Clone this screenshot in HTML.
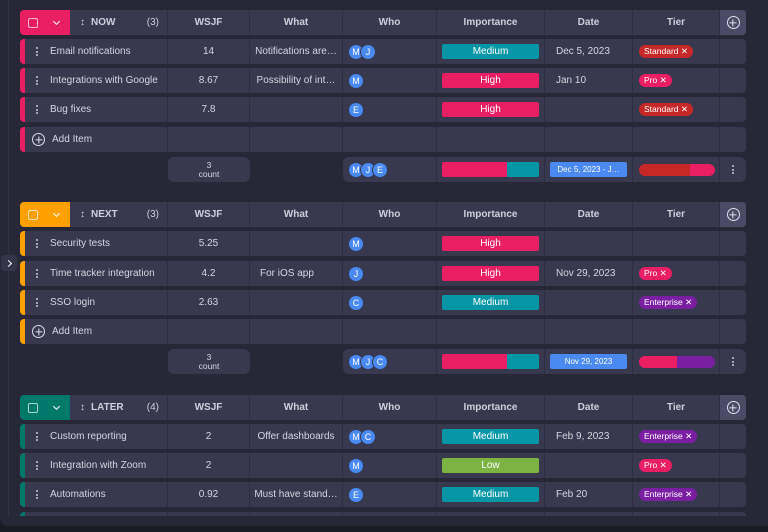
<!DOCTYPE html>
<html><head><meta charset="utf-8"><style>
*{box-sizing:border-box;margin:0;padding:0}
body{width:768px;height:532px;background:#1b1b26;font-family:"Liberation Sans",sans-serif;color:#d6d6e2;font-size:10px;position:relative;overflow:hidden}
.panel{position:absolute;left:0;top:0;width:768px;height:526px;background:#272738;border-radius:0 0 8px 8px}
.inner{position:absolute;left:8px;top:0;width:760px;height:516px;border-left:1px solid #323246;overflow:hidden}
.row{position:absolute;left:20px;width:726px;height:25px;background:#38384f;border-radius:4px;display:flex;overflow:hidden}
.c{height:100%;border-right:1px solid #2e2e43;display:flex;align-items:center;justify-content:center;flex:none}
.w0{width:143px;justify-content:flex-start}.w1{width:82px}.w2{width:93px}.w3{width:94px;justify-content:flex-start;padding-left:5px}.w4{width:108px}.w5{width:88px;justify-content:flex-start;padding-left:11px}.w6{width:87px;justify-content:flex-start;padding-left:6px}.w7{width:26px;border-right:none}
.stripe{width:5px;height:100%;flex:none}
.hd .c{font-weight:bold;color:#cfcfdc}
.hblk{width:50px;height:100%;display:flex;align-items:center;padding-left:8px;flex:none}
.cb{width:10px;height:10px;border:1px solid rgba(255,255,255,.7);border-radius:2px}
.chev{margin-left:16px;width:5px;height:5px;border-right:1.5px solid #fff;border-bottom:1.5px solid #fff;transform:rotate(45deg);margin-top:-3px}
.hname{width:98px;justify-content:flex-start;padding-left:10px;font-weight:bold}
.hname .cnt{margin-left:auto;margin-right:8px;font-weight:normal}
.dots{width:2px;margin:0 12px 0 11px;display:flex;flex-direction:column;gap:1.5px}
.dots i{display:block;width:2px;height:2px;background:#c8c8d6;border-radius:1px}
.av{width:16px;height:16px;border-radius:50%;background:#4a88f2;color:#fff;font-size:9px;display:flex;align-items:center;justify-content:center;border:1px solid #38384f;margin-right:-4px}
.pill{width:97px;height:15px;border-radius:2px;color:#fff;display:flex;align-items:center;justify-content:center}
.med{background:#0796a5}.high{background:#e91e63}.low{background:#7cb342}
.tag{height:13px;border-radius:7px;color:#fff;font-size:8.5px;padding:0 5px;display:flex;align-items:center}
.std{background:#c62828}.pro{background:#e91e63}.ent{background:#7b1fa2}
.plus{width:13px;height:13px;border:1.3px solid #e0e0ea;border-radius:50%;position:relative}
.plus:before,.plus:after{content:"";position:absolute;background:#e0e0ea;left:50%;top:50%;transform:translate(-50%,-50%)}
.plus:before{width:7px;height:1.3px}.plus:after{width:1.3px;height:7px}
.pc{background:#4b4b66}
.sum{position:absolute;height:25px;background:#38384f;border-radius:6px;display:flex}
.cntbox{left:168px;width:82px;flex-direction:column;align-items:center;justify-content:center;line-height:9px;font-size:8.5px}
.bar{display:flex;height:15px;border-radius:2px;overflow:hidden;width:97px}
.tbar{display:flex;height:12px;border-radius:6px;overflow:hidden;width:76px}
.dchip{width:77px;height:15px;background:#4a88f2;border-radius:2px;color:#fff;font-size:8px;display:flex;align-items:center;justify-content:center}
.toggle{position:absolute;left:1px;top:255px;width:16px;height:16px;background:#353549;border-radius:4px;display:flex;align-items:center;justify-content:center}
.toggle i{width:5px;height:5px;border-right:1.5px solid #fff;border-top:1.5px solid #fff;transform:rotate(45deg);margin-left:-2px}
</style></head><body>
<div class="panel"><div class="inner"></div></div>

<!-- NOW -->
<div class="row hd" style="top:10px"><div class="hblk" style="background:#e91e63"><div class="cb"></div><div class="chev"></div></div><div class="c hname"><span style="margin-right:6px">↕</span>NOW<span class="cnt">(3)</span></div><div class="c w1">WSJF</div><div class="c w2">What</div><div class="c w3" style="justify-content:center;padding:0">Who</div><div class="c w4">Importance</div><div class="c w5" style="justify-content:center;padding:0">Date</div><div class="c w6" style="justify-content:center;padding:0">Tier</div><div class="c w7 pc"><div class="plus"></div></div></div>
<div class="row" style="top:39px"><div class="stripe" style="background:#e91e63"></div><div class="c w0"><div class="dots"><i></i><i></i><i></i></div>Email notifications</div><div class="c w1">14</div><div class="c w2">Notifications are…</div><div class="c w3"><div class="av">M</div><div class="av">J</div></div><div class="c w4"><div class="pill med">Medium</div></div><div class="c w5">Dec 5, 2023</div><div class="c w6"><div class="tag std">Standard ✕</div></div><div class="c w7"></div></div>
<div class="row" style="top:68px"><div class="stripe" style="background:#e91e63"></div><div class="c w0"><div class="dots"><i></i><i></i><i></i></div>Integrations with Google</div><div class="c w1">8.67</div><div class="c w2">Possibility of int…</div><div class="c w3"><div class="av">M</div></div><div class="c w4"><div class="pill high">High</div></div><div class="c w5">Jan 10</div><div class="c w6"><div class="tag pro">Pro ✕</div></div><div class="c w7"></div></div>
<div class="row" style="top:97px"><div class="stripe" style="background:#e91e63"></div><div class="c w0"><div class="dots"><i></i><i></i><i></i></div>Bug fixes</div><div class="c w1">7.8</div><div class="c w2"></div><div class="c w3"><div class="av">E</div></div><div class="c w4"><div class="pill high">High</div></div><div class="c w5"></div><div class="c w6"><div class="tag std">Standard ✕</div></div><div class="c w7"></div></div>
<div class="row" style="top:127px"><div class="stripe" style="background:#e91e63"></div><div class="c w0"><div class="plus" style="margin:0 7px 0 7px"></div>Add Item</div><div class="c w1"></div><div class="c w2"></div><div class="c w3"></div><div class="c w4"></div><div class="c w5"></div><div class="c w6"></div><div class="c w7"></div></div>
<div class="sum cntbox" style="top:157px"><div>3</div><div>count</div></div>
<div class="sum" style="top:157px;left:343px;width:403px"><div class="c w3" style="border-right:1px solid #2e2e43"><div class="av">M</div><div class="av">J</div><div class="av">E</div></div><div class="c w4"><div class="bar"><div style="width:65px;background:#e91e63"></div><div style="flex:1;background:#0796a5"></div></div></div><div class="c w5" style="padding-left:5px"><div class="dchip">Dec 5, 2023 - J…</div></div><div class="c w6"><div class="tbar"><div style="width:51px;background:#c62828"></div><div style="flex:1;background:#e91e63"></div></div></div><div class="c w7"><div class="dots" style="margin:0"><i></i><i></i><i></i></div></div></div>

<!-- NEXT -->
<div class="row hd" style="top:202px"><div class="hblk" style="background:#ffa000"><div class="cb"></div><div class="chev"></div></div><div class="c hname"><span style="margin-right:6px">↕</span>NEXT<span class="cnt">(3)</span></div><div class="c w1">WSJF</div><div class="c w2">What</div><div class="c w3" style="justify-content:center;padding:0">Who</div><div class="c w4">Importance</div><div class="c w5" style="justify-content:center;padding:0">Date</div><div class="c w6" style="justify-content:center;padding:0">Tier</div><div class="c w7 pc"><div class="plus"></div></div></div>
<div class="row" style="top:231px"><div class="stripe" style="background:#ffa000"></div><div class="c w0"><div class="dots"><i></i><i></i><i></i></div>Security tests</div><div class="c w1">5.25</div><div class="c w2"></div><div class="c w3"><div class="av">M</div></div><div class="c w4"><div class="pill high">High</div></div><div class="c w5"></div><div class="c w6"></div><div class="c w7"></div></div>
<div class="row" style="top:261px"><div class="stripe" style="background:#ffa000"></div><div class="c w0"><div class="dots"><i></i><i></i><i></i></div>Time tracker integration</div><div class="c w1">4.2</div><div class="c w2" style="justify-content:flex-start;padding-left:10px">For iOS app</div><div class="c w3"><div class="av">J</div></div><div class="c w4"><div class="pill high">High</div></div><div class="c w5">Nov 29, 2023</div><div class="c w6"><div class="tag pro">Pro ✕</div></div><div class="c w7"></div></div>
<div class="row" style="top:290px"><div class="stripe" style="background:#ffa000"></div><div class="c w0"><div class="dots"><i></i><i></i><i></i></div>SSO login</div><div class="c w1">2.63</div><div class="c w2"></div><div class="c w3"><div class="av">C</div></div><div class="c w4"><div class="pill med">Medium</div></div><div class="c w5"></div><div class="c w6"><div class="tag ent">Enterprise ✕</div></div><div class="c w7"></div></div>
<div class="row" style="top:319px"><div class="stripe" style="background:#ffa000"></div><div class="c w0"><div class="plus" style="margin:0 7px 0 7px"></div>Add Item</div><div class="c w1"></div><div class="c w2"></div><div class="c w3"></div><div class="c w4"></div><div class="c w5"></div><div class="c w6"></div><div class="c w7"></div></div>
<div class="sum cntbox" style="top:349px"><div>3</div><div>count</div></div>
<div class="sum" style="top:349px;left:343px;width:403px"><div class="c w3"><div class="av">M</div><div class="av">J</div><div class="av">C</div></div><div class="c w4"><div class="bar"><div style="width:65px;background:#e91e63"></div><div style="flex:1;background:#0796a5"></div></div></div><div class="c w5" style="padding-left:5px"><div class="dchip">Nov 29, 2023</div></div><div class="c w6"><div class="tbar"><div style="width:38px;background:#e91e63"></div><div style="flex:1;background:#7b1fa2"></div></div></div><div class="c w7"><div class="dots" style="margin:0"><i></i><i></i><i></i></div></div></div>

<!-- LATER -->
<div class="row hd" style="top:395px"><div class="hblk" style="background:#00796b"><div class="cb"></div><div class="chev"></div></div><div class="c hname"><span style="margin-right:6px">↕</span>LATER<span class="cnt">(4)</span></div><div class="c w1">WSJF</div><div class="c w2">What</div><div class="c w3" style="justify-content:center;padding:0">Who</div><div class="c w4">Importance</div><div class="c w5" style="justify-content:center;padding:0">Date</div><div class="c w6" style="justify-content:center;padding:0">Tier</div><div class="c w7 pc"><div class="plus"></div></div></div>
<div class="row" style="top:424px"><div class="stripe" style="background:#00796b"></div><div class="c w0"><div class="dots"><i></i><i></i><i></i></div>Custom reporting</div><div class="c w1">2</div><div class="c w2">Offer dashboards</div><div class="c w3"><div class="av">M</div><div class="av">C</div></div><div class="c w4"><div class="pill med">Medium</div></div><div class="c w5">Feb 9, 2023</div><div class="c w6"><div class="tag ent">Enterprise ✕</div></div><div class="c w7"></div></div>
<div class="row" style="top:453px"><div class="stripe" style="background:#00796b"></div><div class="c w0"><div class="dots"><i></i><i></i><i></i></div>Integration with Zoom</div><div class="c w1">2</div><div class="c w2"></div><div class="c w3"><div class="av">M</div></div><div class="c w4"><div class="pill low">Low</div></div><div class="c w5"></div><div class="c w6"><div class="tag pro">Pro ✕</div></div><div class="c w7"></div></div>
<div class="row" style="top:482px"><div class="stripe" style="background:#00796b"></div><div class="c w0"><div class="dots"><i></i><i></i><i></i></div>Automations</div><div class="c w1">0.92</div><div class="c w2">Must have stand…</div><div class="c w3"><div class="av">E</div></div><div class="c w4"><div class="pill med">Medium</div></div><div class="c w5">Feb 20</div><div class="c w6"><div class="tag ent">Enterprise ✕</div></div><div class="c w7"></div></div>
<div class="row" style="top:512px;height:4px;border-radius:4px 4px 0 0"><div class="stripe" style="background:#00796b"></div><div class="c w0"></div><div class="c w1"></div><div class="c w2"></div><div class="c w3"></div><div class="c w4"></div><div class="c w5"></div><div class="c w6"></div><div class="c w7"></div></div>
<div style="position:absolute;left:8px;top:516px;width:760px;height:10px;background:#272738"></div>

<div class="toggle"><i></i></div>
</body></html>
